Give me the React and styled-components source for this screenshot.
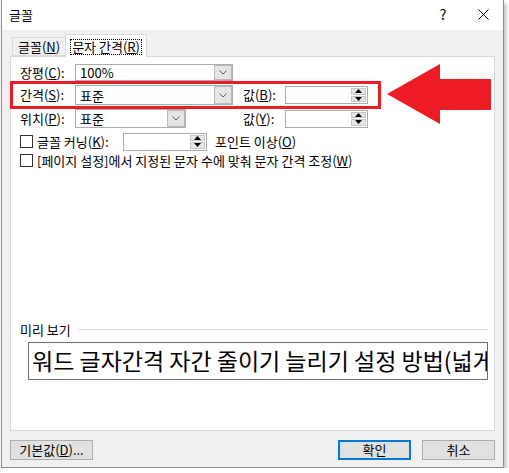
import React from 'react';
import styled, { createGlobalStyle } from 'styled-components';

const GlobalStyle = createGlobalStyle`
  html, body {
    margin: 0;
    padding: 0;
    background: #ffffff;
  }
  body {
    font-family: "Noto Sans CJK KR", "Noto Sans", sans-serif;
    font-size: 13px;
    color: #000;
  }
  * { box-sizing: border-box; }
`;

const Window = styled.div`
  width: 503px;
  height: 468px;
  margin-left: 1px;
  border: 1px solid #8c8c8c;
  border-top: none;
  background: #f0f0f0;
  box-shadow: 2px 3px 4px rgba(0, 0, 0, 0.28);
  display: flex;
  flex-direction: column;
`;

const TitleBar = styled.div`
  height: 30px;
  background: #ffffff;
  display: flex;
  align-items: center;
  padding-left: 7px;
  padding-bottom: 2px;
`;

const Title = styled.span`
  flex: 1;
`;

const TitleButton = styled.span`
  width: 40px;
  display: flex;
  justify-content: center;
  align-items: center;
  font-size: 14px;
`;

const Body = styled.div`
  flex: 1;
  padding: 3px 8px 0 8px;
  display: flex;
  flex-direction: column;
`;

const TabStrip = styled.div`
  height: 23px;
  display: flex;
  align-items: flex-end;
  padding-left: 2px;
  position: relative;
  z-index: 1;
`;

const Tab = styled.div`
  height: ${p => (p.$active ? '23px' : '19px')};
  padding: ${p => (p.$active ? '0 4px' : '0 5px')};
  margin-bottom: ${p => (p.$active ? '-1px' : '0')};
  background: ${p => (p.$active ? '#ffffff' : '#f0f0f0')};
  border: 1px solid #d9d9d9;
  border-bottom: ${p => (p.$active ? 'none' : '1px solid #d9d9d9')};
  border-right: ${p => (p.$active ? '1px solid #d9d9d9' : 'none')};
  display: flex;
  align-items: center;
  white-space: nowrap;
`;

const FocusText = styled.span`
  border: 1px dotted #000;
  padding: 0 1px;
  line-height: 14px;
  margin-top: 1px;
`;

const Panel = styled.div`
  position: relative;
  height: 375px;
  background: #ffffff;
  border: 1px solid #d9d9d9;
  padding: 7px 6px 7px 9px;
  display: flex;
  flex-direction: column;
`;

const FieldGrid = styled.div`
  display: grid;
  grid-template-columns: 55px 158px 10px 42px 83px;
  grid-template-rows: 17px 20px 19px;
  row-gap: 4px;
  align-items: center;
`;

const Label = styled.span`
  white-space: nowrap;
  line-height: 16px;
  grid-column: ${p => p.$col || 'auto'};
`;

const SelectBox = styled.div`
  width: ${p => p.$width}px;
  height: ${p => p.$height || 18}px;
  border: 1px solid #acacac;
  background: #ffffff;
  display: flex;
  align-items: stretch;
  justify-self: start;
`;

const SelectValue = styled.span`
  flex: 1;
  padding-left: 4px;
  display: flex;
  align-items: center;
`;

const DropButton = styled.span`
  width: 18px;
  background: #e5e5e5;
  border: 1px solid #b9b9b9;
  display: flex;
  align-items: center;
  justify-content: center;
`;

const Spinner = styled.div`
  width: ${p => p.$width || 83}px;
  height: 18px;
  border: 1px solid #acacac;
  background: #ffffff;
  display: flex;
  justify-content: flex-end;
  grid-column: ${p => p.$col || 'auto'};
  padding: 1px;
  flex-shrink: 0;
`;

const SpinButtons = styled.span`
  width: 15px;
  display: flex;
  flex-direction: column;
  gap: 1px;
`;

const SpinHalf = styled.span`
  flex: 1;
  background: #e5e5e5;
  border: 1px solid #c8c8c8;
  display: flex;
  align-items: center;
  justify-content: center;
`;

const CheckRow = styled.div`
  display: flex;
  align-items: center;
  height: 17px;
  margin-top: ${p => p.$top}px;
`;

const CheckBox = styled.span`
  width: 13px;
  height: 13px;
  border: 1px solid #333;
  background: #fff;
  margin-right: 4px;
  flex-shrink: 0;
`;

const CheckLabel = styled.span`
  width: ${p => (p.$width ? `${p.$width}px` : 'auto')};
  flex-shrink: 0;
  white-space: nowrap;
`;

const AfterText = styled.span`
  margin-left: 8px;
  white-space: nowrap;
`;

const PreviewHeader = styled.div`
  margin-top: 152px;
  display: flex;
  align-items: center;
  gap: 7px;
  height: 16px;
`;

const Rule = styled.span`
  flex: 1;
  height: 1px;
  background: #dcdcdc;
`;

const PreviewBox = styled.div`
  margin: 5px 0 0 8px;
  height: 38px;
  border: 1px solid #6e6e6e;
  overflow: hidden;
  white-space: nowrap;
  padding-left: 3px;
  font-size: 23px;
  line-height: 35px;
`;

const Highlight = styled.div`
  position: absolute;
  left: -1px;
  top: 24px;
  width: 371px;
  height: 28px;
  border: 3px solid #ed1c24;
  pointer-events: none;
`;

const Arrow = styled.svg`
  position: absolute;
  left: 376px;
  top: 7px;
`;

const ButtonRow = styled.div`
  margin-top: 9px;
  display: flex;
  align-items: center;
`;

const Button = styled.button`
  width: ${p => p.$width}px;
  height: 20px;
  background: #e1e1e1;
  border: ${p => (p.$primary ? '2px solid #0078d7' : '1px solid #adadad')};
  font-family: inherit;
  font-size: 13px;
  line-height: 16px;
  color: #000;
  padding: 0;
  margin-left: ${p => p.$gap || 0}px;
`;

const Spacer = styled.span`
  flex: 1;
`;

const Chevron = () => (
  <svg width="8" height="5" viewBox="0 0 8 5">
    <polyline points="0.5,0.5 4,4 7.5,0.5" fill="none" stroke="#606060" strokeWidth="1" />
  </svg>
);

const Tri = ({ up }) => (
  <svg width="7" height="4" viewBox="0 0 7 4">
    <polygon points={up ? '3.5,0 7,4 0,4' : '0,0 7,0 3.5,4'} fill="#000" />
  </svg>
);

const Select = ({ width, height, value }) => (
  <SelectBox $width={width} $height={height}>
    <SelectValue>{value}</SelectValue>
    <DropButton><Chevron /></DropButton>
  </SelectBox>
);

const Spin = ({ width, col }) => (
  <Spinner $width={width} $col={col}>
    <SpinButtons>
      <SpinHalf><Tri up /></SpinHalf>
      <SpinHalf><Tri /></SpinHalf>
    </SpinButtons>
  </Spinner>
);

export default function App() {
  return (
    <>
      <GlobalStyle />
      <Window>
        <TitleBar>
          <Title>글꼴</Title>
          <TitleButton>?</TitleButton>
          <TitleButton>
            <svg width="11" height="11" viewBox="0 0 11 11">
              <path d="M0.5 0.5 L10.5 10.5 M10.5 0.5 L0.5 10.5" stroke="#000" strokeWidth="1" />
            </svg>
          </TitleButton>
        </TitleBar>
        <Body>
          <TabStrip>
            <Tab>글꼴(<u>N</u>)</Tab>
            <Tab $active>
              <FocusText>문자 간격(<u>R</u>)</FocusText>
            </Tab>
          </TabStrip>
          <Panel>
            <FieldGrid>
              <Label>장평(<u>C</u>):</Label>
              <Select width={158} height={17} value="100%" />
              <span />
              <span />
              <span />

              <Label>간격(<u>S</u>):</Label>
              <Select width={158} height={20} value="표준" />
              <Label $col="4">값(<u>B</u>):</Label>
              <Spin />

              <Label>위치(<u>P</u>):</Label>
              <Select width={111} height={19} value="표준" />
              <Label $col="4">값(<u>Y</u>):</Label>
              <Spin />
            </FieldGrid>

            <CheckRow $top={5}>
              <CheckBox />
              <CheckLabel $width={86}>글꼴 커닝(<u>K</u>):</CheckLabel>
              <Spin width={84} />
              <AfterText>포인트 이상(<u>O</u>)</AfterText>
            </CheckRow>
            <CheckRow $top={2}>
              <CheckBox />
              <CheckLabel>[페이지 설정]에서 지정된 문자 수에 맞춰 문자 간격 조정(<u>W</u>)</CheckLabel>
            </CheckRow>

            <PreviewHeader>
              <span>미리 보기</span>
              <Rule />
            </PreviewHeader>
            <PreviewBox>워드 글자간격 자간 줄이기 늘리기 설정 방법(넓게</PreviewBox>

            <Highlight />
            <Arrow width="105" height="61" viewBox="0 0 105 61">
              <polygon points="0,30 53,0 53,15 104,15 104,46 53,46 53,60" fill="#ed1c24" />
            </Arrow>
          </Panel>
          <ButtonRow>
            <Button $width={83}>기본값(<u>D</u>)...</Button>
            <Spacer />
            <Button $width={73} $primary>확인</Button>
            <Button $width={73} $gap={11}>취소</Button>
          </ButtonRow>
        </Body>
      </Window>
    </>
  );
}
